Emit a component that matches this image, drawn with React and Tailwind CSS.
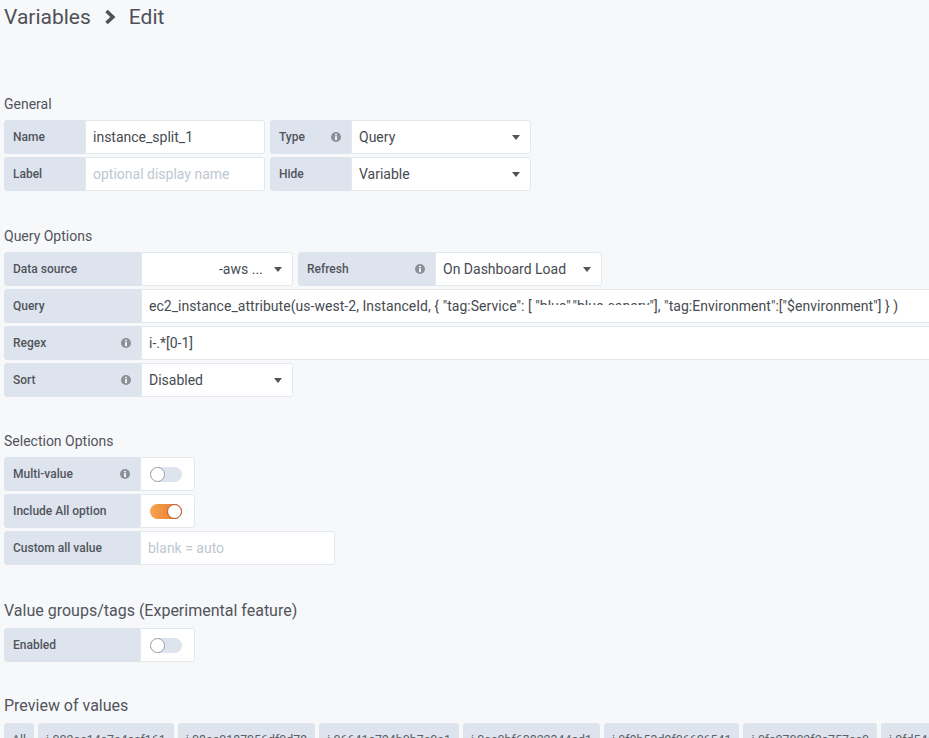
import React from 'react';

// small grey "i" badge used in some labels
const InfoIcon = () => (
  <svg width="10" height="10" viewBox="0 0 10 10" className="shrink-0">
    <circle cx="5" cy="5" r="5" fill="#8b9199" />
    <circle cx="5" cy="2.6" r="0.95" fill="#fff" />
    <rect x="4.15" y="4.1" width="1.7" height="4" fill="#fff" />
  </svg>
);

const Caret = () => (
  <svg width="8" height="5" viewBox="0 0 8 5" className="shrink-0">
    <path d="M0 0h8L4 5z" fill="#52545c" />
  </svg>
);

const Label = ({ children, width, info }) => (
  <div
    className={`flex shrink-0 items-center justify-between h-full bg-[#dde4ed] border border-[#dde4ed] rounded-l-[3px] pl-[8px] pr-[9px] text-[12px] font-medium text-[#52545c] ${width}`}
  >
    <span>{children}</span>
    {info && <InfoIcon />}
  </div>
);

const Input = ({ width, value, placeholder }) => (
  <div
    className={`flex shrink-0 items-center h-full bg-white border border-[#e3e8ee] rounded-r-[3px] px-[7px] text-[14px] text-[#464b52] ${width}`}
  >
    {value ? <span>{value}</span> : <span className="text-[#bec7d1]">{placeholder}</span>}
  </div>
);

const Select = ({ width, children, textClass = '' }) => (
  <div
    className={`flex shrink-0 items-center justify-between h-full bg-white border border-[#e3e8ee] rounded-r-[3px] pl-[7px] pr-[10px] text-[14px] text-[#464b52] ${width}`}
  >
    <span className={textClass}>{children}</span>
    <Caret />
  </div>
);

const Switch = ({ on }) => (
  <div
    className={`relative w-[32px] h-[15px] rounded-full ${
      on ? 'bg-linear-to-r from-[#f6a650] to-[#e56f2a]' : 'bg-[#dde4ed]'
    }`}
  >
    <div
      className={`absolute top-0 w-[15px] h-[15px] rounded-full bg-white border ${
        on ? 'right-0 border-[#b5561d]' : 'left-0 border-[#9aa1a9]'
      }`}
    />
  </div>
);

const SwitchCell = ({ on }) => (
  <div className="flex shrink-0 items-center w-[55px] h-full bg-white border border-[#e3e8ee] rounded-r-[3px] pl-[9px]">
    <Switch on={on} />
  </div>
);

const Row = ({ children }) => <div className="flex h-[34px] gap-[5px]">{children}</div>;
const Group = ({ children }) => <div className="flex shrink-0 h-full">{children}</div>;

// part of the query that is scrubbed out in the original
const Scrubbed = ({ children }) => (
  <span className="relative">
    {children}
    <span className="absolute left-0 right-0 top-[7px] bottom-[-2px] bg-white" />
  </span>
);

const previewValues = [
  'All',
  'i-002ac14c7c4ccf161',
  'i-08ac0187056df0d79',
  'i-06641c794b0b7e0a1',
  'i-0ac0bf60822344cd1',
  'i-0f9b53d9f06606541',
  'i-0fc07002f2c757cc0',
  'i-0fd54a1c2b3e4f5a1',
];

export default function App() {
  return (
    <div className="w-[929px] h-[738px] overflow-hidden bg-[#f7f8fa] px-[4px] font-[Roboto,sans-serif] text-[#52545c]">
      {/* Page title */}
      <div className="flex items-center mt-[2px] h-[30px] text-[21px] leading-[30px] text-[#4e5158]">
        <span>Variables</span>
        <svg width="12" height="16" viewBox="0 0 12 16" className="ml-[13px] mr-[13px]">
          <polyline points="2.5,2 8.8,8 2.5,14" fill="none" stroke="#4e5158" strokeWidth="3.6" />
        </svg>
        <span>Edit</span>
      </div>

      {/* General */}
      <h3 className="mt-[62px] mb-[6px] text-[14px] leading-[20px]">General</h3>
      <div className="flex flex-col gap-[3px]">
        <Row>
          <Group>
            <Label width="w-[81px]">Name</Label>
            <Input width="w-[180px]" value="instance_split_1" />
          </Group>
          <Group>
            <Label width="w-[81px]" info>Type</Label>
            <Select width="w-[180px]">Query</Select>
          </Group>
        </Row>
        <Row>
          <Group>
            <Label width="w-[81px]">Label</Label>
            <Input width="w-[180px]" placeholder="optional display name" />
          </Group>
          <Group>
            <Label width="w-[81px]">Hide</Label>
            <Select width="w-[180px]">Variable</Select>
          </Group>
        </Row>
      </div>

      {/* Query Options */}
      <h3 className="mt-[35px] mb-[6px] text-[14px] leading-[20px]">Query Options</h3>
      <div className="flex flex-col gap-[3px]">
        <Row>
          <Group>
            <Label width="w-[137px]">Data source</Label>
            <Select width="w-[152px]" textClass="pl-[70px]">-aws ...</Select>
          </Group>
          <Group>
            <Label width="w-[137px]" info>Refresh</Label>
            <Select width="w-[167px]">On Dashboard Load</Select>
          </Group>
        </Row>
        <Row>
          <Group>
            <Label width="w-[137px]">Query</Label>
            <div className="flex shrink-0 items-center w-[860px] h-full bg-white border border-[#e3e8ee] px-[7px] text-[14px] tracking-[0.04px] text-[#464b52] whitespace-nowrap">
              <span>
                ec2_instance_attribute(us-west-2, InstanceId, {'{'} "tag:Service": [ <Scrubbed>"blue","blue-canary"</Scrubbed>], "tag:Environment":["$environment"] {'}'} )
              </span>
            </div>
          </Group>
        </Row>
        <Row>
          <Group>
            <Label width="w-[137px]" info>Regex</Label>
            <Input width="w-[860px]" value="i-.*[0-1]" />
          </Group>
        </Row>
        <Row>
          <Group>
            <Label width="w-[137px]" info>Sort</Label>
            <Select width="w-[152px]">Disabled</Select>
          </Group>
        </Row>
      </div>

      {/* Selection Options */}
      <h3 className="mt-[34px] mb-[6px] text-[14px] leading-[20px]">Selection Options</h3>
      <div className="flex flex-col gap-[3px]">
        <Row>
          <Group>
            <Label width="w-[136px]" info>Multi-value</Label>
            <SwitchCell on={false} />
          </Group>
        </Row>
        <Row>
          <Group>
            <Label width="w-[136px]">Include All option</Label>
            <SwitchCell on />
          </Group>
        </Row>
        <Row>
          <Group>
            <Label width="w-[136px]">Custom all value</Label>
            <Input width="w-[195px]" placeholder="blank = auto" />
          </Group>
        </Row>
      </div>

      {/* Value groups */}
      <h3 className="mt-[35px] mb-[6px] text-[16px] leading-[22px]">Value groups/tags (Experimental feature)</h3>
      <Row>
        <Group>
          <Label width="w-[136px]">Enabled</Label>
          <SwitchCell on={false} />
        </Group>
      </Row>

      {/* Preview */}
      <h3 className="mt-[33px] mb-[6px] text-[16px] leading-[22px]">Preview of values</h3>
      <div className="flex gap-[4px] whitespace-nowrap">
        {previewValues.map((v) => (
          <div
            key={v}
            className="shrink-0 h-[34px] leading-[34px] px-[8px] rounded-[3px] bg-[#dde4ed] text-[12.4px] text-[#5b5f66]"
          >
            {v}
          </div>
        ))}
      </div>
    </div>
  );
}
